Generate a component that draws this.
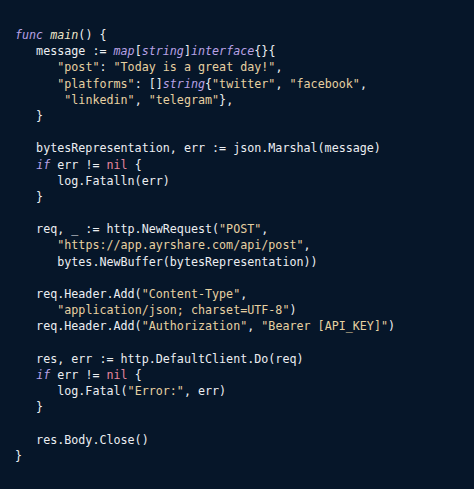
type Tok = [string, string?]

const K = "text-[#b9a2e6] italic"
const F = "text-[#eee6c8] italic"
const S = "text-[#e6d1a1]"
const N = "text-[#e3869e]"

const lines: Tok[][] = [
  [["func", K], [" "], ["main", F], ["() {"]],
  [["   message := "], ["map", K], ["["], ["string", K], ["]"], ["interface", K], ["{}{"]],
  [["      "], ['"post"', S], [": "], ['"Today is a great day!"', S], [","]],
  [["      "], ['"platforms"', S], [": []"], ["string", K], ["{"], ['"twitter"', S], [", "], ['"facebook"', S], [","]],
  [["       "], ['"linkedin"', S], [", "], ['"telegram"', S], ["},"]],
  [["   }"]],
  [],
  [["   bytesRepresentation, err := json.Marshal(message)"]],
  [["   "], ["if", K], [" err != "], ["nil", N], [" {"]],
  [["      log.Fatalln(err)"]],
  [["   }"]],
  [],
  [["   req, _ := http.NewRequest("], ['"POST"', S], [","]],
  [["      "], ['"https://app.ayrshare.com/api/post"', S], [","]],
  [["      bytes.NewBuffer(bytesRepresentation))"]],
  [],
  [["   req.Header.Add("], ['"Content-Type"', S], [","]],
  [["      "], ['"application/json; charset=UTF-8"', S], [")"]],
  [["   req.Header.Add("], ['"Authorization"', S], [", "], ['"Bearer [API_KEY]"', S], [")"]],
  [],
  [["   res, err := http.DefaultClient.Do(req)"]],
  [["   "], ["if", K], [" err != "], ["nil", N], [" {"]],
  [["      log.Fatal("], ['"Error:"', S], [", err)"]],
  [["   }"]],
  [],
  [["   res.Body.Close()"]],
  [["}"]],
]

export default function App() {
  return (
    <div className="w-[474px] h-[489px] bg-[#061629] overflow-hidden">
      <pre className="pt-[27px] pl-[15px] text-[11.7px] leading-[16.2px] text-[#eceef2] font-['DejaVu_Sans_Mono',monospace]">
        {lines.map((line, i) => (
          <div key={i} className="h-[16.2px] whitespace-pre">
            {line.map(([text, cls], j) => (
              <span key={j} className={cls}>
                {text}
              </span>
            ))}
          </div>
        ))}
      </pre>
    </div>
  )
}
